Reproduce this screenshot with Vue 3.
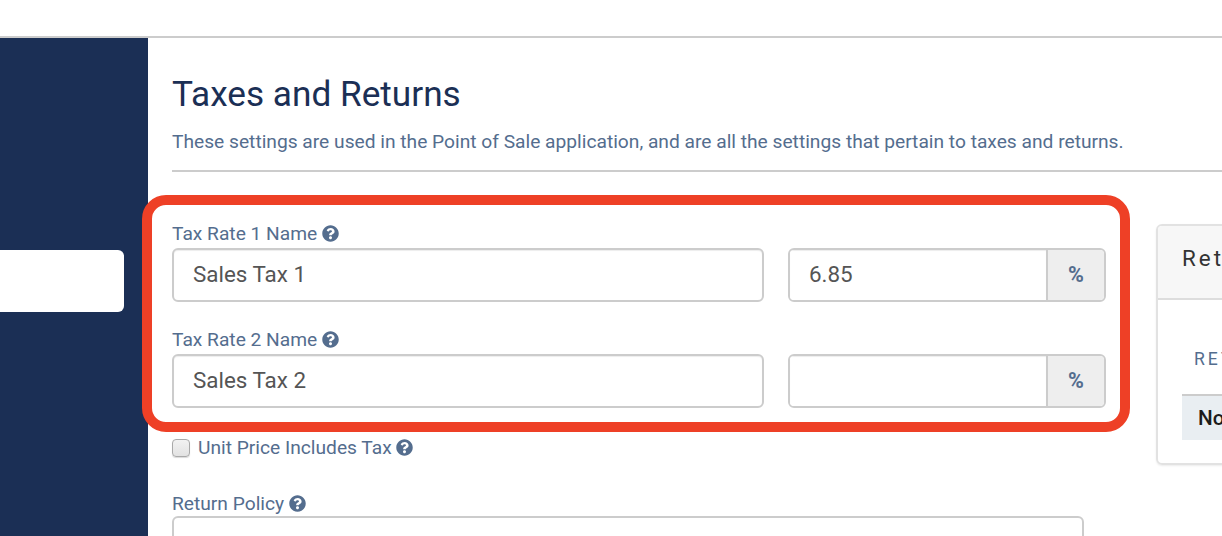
<template>
  <div class="page">
    <div class="topbar"></div>
    <div class="body">
      <aside class="sidebar">
        <div class="nav-active"></div>
      </aside>
      <main class="main">
        <h1 class="title">Taxes and Returns</h1>
        <p class="subtitle">These settings are used in the Point of Sale application, and are all the settings that pertain to taxes and returns.</p>
        <hr class="rule" />
        <div class="columns">
          <div class="form">
            <div class="highlight"></div>
            <div v-for="tax in taxes" :key="tax.label" class="tax-row">
              <label class="field-label">{{ tax.label }}
                <svg class="help" viewBox="0 0 512 512"><path :d="helpPath" /></svg>
              </label>
              <div class="tax-inputs">
                <input class="input name-input" type="text" :value="tax.name" />
                <div class="rate-group">
                  <input class="rate-input" type="text" :value="tax.rate" />
                  <span class="addon">%</span>
                </div>
              </div>
            </div>
            <label class="check-row">
              <input class="check" type="checkbox" />
              <span class="field-label">Unit Price Includes Tax
                <svg class="help" viewBox="0 0 512 512"><path :d="helpPath" /></svg>
              </span>
            </label>
            <label class="field-label policy-label">Return Policy
              <svg class="help" viewBox="0 0 512 512"><path :d="helpPath" /></svg>
            </label>
            <textarea class="policy"></textarea>
          </div>
          <section class="panel">
            <div class="panel-head">Returns</div>
            <div class="panel-body">
              <div class="panel-caption">RETURN REASONS</div>
              <div class="panel-row">None</div>
            </div>
          </section>
        </div>
      </main>
    </div>
  </div>
</template>

<script setup>
const helpPath =
  "M504 256c0 136.997-111.043 248-248 248S8 392.997 8 256C8 119.083 119.043 8 256 8s248 111.083 248 248zM262.655 90c-54.497 0-89.255 22.957-116.549 63.758-3.536 5.286-2.353 12.415 2.715 16.258l34.699 26.31c5.205 3.947 12.621 3.008 16.665-2.122 17.864-22.658 30.113-35.797 57.303-35.797 20.429 0 45.698 13.148 45.698 32.958 0 14.976-12.363 22.667-32.534 33.976C247.128 238.528 216 254.941 216 296v4c0 6.627 5.373 12 12 12h56c6.627 0 12-5.373 12-12v-1.333c0-28.462 83.186-29.647 83.186-106.667 0-58.002-60.165-102-116.531-102zM256 338c-25.365 0-46 20.635-46 46 0 25.364 20.635 46 46 46s46-20.636 46-46c0-25.365-20.635-46-46-46z";

const taxes = [
  { label: "Tax Rate 1 Name", name: "Sales Tax 1", rate: "6.85" },
  { label: "Tax Rate 2 Name", name: "Sales Tax 2", rate: "" },
];
</script>

<style>
html,
body {
  margin: 0;
  background: #fff;
  overflow: hidden;
}
</style>

<style scoped>
.page {
  width: 1222px;
  height: 536px;
  overflow: hidden;
  font-family: Roboto, "Liberation Sans", sans-serif;
  color: #546d8e;
}

.topbar {
  height: 36px;
  border-bottom: 2px solid #cccccc;
}

.body {
  display: flex;
  height: 498px;
}

.sidebar {
  flex: 0 0 148px;
  background: #1b2f55;
  padding-top: 212px;
  box-sizing: border-box;
}

.nav-active {
  width: 124px;
  height: 62px;
  background: #fff;
  border-radius: 0 6px 6px 0;
}

.main {
  flex: 1;
  min-width: 0;
  padding: 35px 0 0 24px;
}

.title {
  margin: 0;
  font-size: 35.2px;
  line-height: 42px;
  font-weight: 400;
  color: #1b2f55;
}

.subtitle {
  margin: 15px 0 0;
  font-size: 19.2px;
  line-height: 24px;
  white-space: nowrap;
}

.rule {
  margin: 16px 0 0;
  border: 0;
  border-top: 2px solid #cccccc;
}

.columns {
  display: grid;
  grid-template-columns: 934px 1fr;
  column-gap: 50px;
  margin-top: 52px;
}

.form {
  position: relative;
}

.highlight {
  position: absolute;
  left: -30px;
  top: -29px;
  width: 988px;
  height: 237px;
  box-sizing: border-box;
  border: 10px solid #ee4026;
  border-radius: 24px;
  pointer-events: none;
}

.tax-row {
  margin-bottom: 28px;
}

.field-label {
  display: block;
  font-size: 19.2px;
  line-height: 20px;
  margin-bottom: 4px;
}

.help {
  width: 17px;
  height: 17px;
  fill: #546d8e;
  vertical-align: -2px;
}

.tax-inputs {
  display: flex;
  gap: 24px;
}

.input,
.rate-group {
  height: 54px;
  box-sizing: border-box;
  border: 2px solid #cccccc;
  border-radius: 6px;
  background: #fff;
}

.input,
.rate-input {
  font-family: inherit;
  font-size: 22.4px;
  color: #555555;
  outline: none;
  box-shadow: inset 0 1px 1px rgba(0, 0, 0, 0.075);
  padding-top: 0;
  padding-bottom: 3px;
}

.name-input {
  width: 592px;
  padding-left: 19px;
  padding-right: 19px;
}

.rate-group {
  width: 318px;
  display: flex;
  overflow: hidden;
}

.rate-input {
  flex: 1;
  min-width: 0;
  border: 0;
  padding-left: 19px;
  padding-right: 19px;
}

.addon {
  flex: 0 0 58px;
  box-sizing: border-box;
  border-left: 2px solid #cccccc;
  background: #eeeeee;
  display: flex;
  align-items: center;
  justify-content: center;
  padding-bottom: 2px;
  font-size: 21.5px;
  font-weight: 700;
  color: #546d8e;
}

.check-row {
  display: flex;
  align-items: center;
  gap: 8px;
  height: 24px;
}

.check-row .field-label {
  margin-bottom: 0;
}

.check {
  appearance: none;
  width: 18px;
  height: 18px;
  margin: 0;
  box-sizing: border-box;
  border: 1px solid #a9a9a9;
  border-radius: 4px;
  background: linear-gradient(#f2f2f2, #e2e2e2);
  box-shadow: 0 1px 1px rgba(0, 0, 0, 0.15);
}

.policy-label {
  margin-top: 34px;
  margin-bottom: 2px;
}

.policy {
  display: block;
  width: 912px;
  height: 80px;
  box-sizing: border-box;
  border: 2px solid #cccccc;
  border-radius: 6px;
  resize: none;
  outline: none;
}

.panel {
  height: 241px;
  width: 300px;
  box-sizing: border-box;
  border: 2px solid #e2e2e2;
  border-radius: 6px;
  box-shadow: 0 1px 2px rgba(0, 0, 0, 0.08);
  overflow: hidden;
}

.panel-head {
  height: 74px;
  box-sizing: border-box;
  padding: 19px 24px 0;
  background: #f7f7f7;
  border-bottom: 2px solid #dddddd;
  font-size: 22.4px;
  line-height: 26px;
  letter-spacing: 3px;
  color: #333;
  white-space: nowrap;
}

.panel-body {
  padding: 47px 0 0 24px;
}

.panel-caption {
  padding-left: 12px;
  font-size: 17.6px;
  line-height: 24px;
  letter-spacing: 3px;
  white-space: nowrap;
}

.panel-row {
  margin-top: 23px;
  height: 46px;
  box-sizing: border-box;
  border-top: 2px solid #cccccc;
  background: #e9eef2;
  padding-left: 16px;
  font-size: 20.8px;
  line-height: 44px;
  font-weight: 500;
  color: #1c1c1c;
}
</style>
